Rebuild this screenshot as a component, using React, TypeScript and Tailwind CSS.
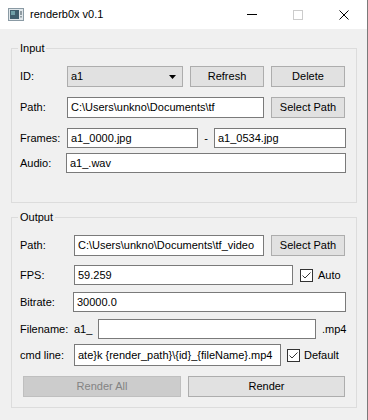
import React from "react";

const field = "flex items-center bg-white border border-[#7a7a7a] pl-[3px] overflow-hidden whitespace-nowrap";
const button = "flex items-center justify-center bg-[#e1e1e1] border border-[#adadad]";

function Group({ title, className, children }: { title: string; className?: string; children: React.ReactNode }) {
  return (
    <fieldset className={`ml-[11px] w-[346px] border border-[#dcdcdc] ${className ?? ""}`}>
      <legend className="ml-[6px] px-[2px] leading-[13px]">{title}</legend>
      <div className="pl-[8px]">{children}</div>
    </fieldset>
  );
}

function Check() {
  return (
    <svg width="13" height="13" viewBox="0 0 13 13" className="shrink-0">
      <rect x="0.5" y="0.5" width="12" height="12" fill="white" stroke="#333333" />
      <polyline points="2.5,6.5 5,9 10.5,3.5" fill="none" stroke="#333333" strokeWidth="1" />
    </svg>
  );
}

function TitleBar() {
  return (
    <div className="flex h-[29px] items-center bg-white">
      <svg width="16" height="13" viewBox="0 0 16 13" className="ml-[8px]">
        <rect x="0.5" y="0.5" width="15" height="12" fill="#dfe6ea" stroke="#8a9aa4" />
        <rect x="2" y="2" width="9" height="9" fill="#3f5f6e" />
        <rect x="3" y="3" width="4" height="4" fill="#6fa0a8" />
        <rect x="12.5" y="3" width="1" height="4" fill="#40505a" />
        <rect x="12.5" y="8" width="1" height="1.5" fill="#40505a" />
      </svg>
      <span className="ml-[6px] text-[11px] text-black">renderb0x v0.1</span>
      <div className="ml-auto flex h-full">
        <div className="flex w-[46px] items-center justify-center">
          <div className="h-px w-[10px] bg-black" />
        </div>
        <div className="flex w-[46px] items-center justify-center">
          <div className="h-[10px] w-[10px] border border-[#cccccc]" />
        </div>
        <div className="flex w-[46px] items-center justify-center">
          <svg width="10" height="10" viewBox="0 0 10 10">
            <path d="M0.5 0.5 L9.5 9.5 M9.5 0.5 L0.5 9.5" stroke="#000" strokeWidth="1" />
          </svg>
        </div>
      </div>
    </div>
  );
}

export default function App() {
  return (
    <div className="h-[420px] w-[368px] overflow-hidden border-r border-[#7a7a7a] bg-[#f0f0f0] font-['Liberation_Sans',Arial,sans-serif] text-[11px] text-black">
      <TitleBar />

      <Group title="Input" className="mt-[13px] pb-[29px]">
        <div className="mt-[11px] flex h-[21px] items-center">
          <span className="w-[47px]">ID:</span>
          <div className={`${button} w-[116px] h-full !justify-between pl-[3px] pr-[6px]`}>
            <span>a1</span>
            <svg width="7" height="4" viewBox="0 0 7 4">
              <path d="M0 0 H7 L3.5 4 Z" fill="#000" />
            </svg>
          </div>
          <div className={`${button} ml-[7px] h-full w-[74px]`}>Refresh</div>
          <div className={`${button} ml-[7px] h-full w-[74px]`}>Delete</div>
        </div>

        <div className="mt-[10px] flex h-[21px] items-center">
          <span className="w-[47px]">Path:</span>
          <div className={`${field} h-full w-[197px]`}>C:\Users\unkno\Documents\tf</div>
          <div className={`${button} ml-[7px] h-full w-[74px]`}>Select Path</div>
        </div>

        <div className="mt-[10px] flex h-[20px] items-center">
          <span className="w-[47px]">Frames:</span>
          <div className={`${field} h-full w-[131px]`}>a1_0000.jpg</div>
          <span className="w-[16px] text-center">-</span>
          <div className={`${field} h-full w-[132px]`}>a1_0534.jpg</div>
        </div>

        <div className="mt-[5px] flex h-[20px] items-center">
          <span className="w-[46px]">Audio:</span>
          <div className={`${field} h-full w-[280px]`}>a1_.wav</div>
        </div>
      </Group>

      <Group title="Output" className="mt-[8px] pb-[10px]">
        <div className="mt-[11px] flex h-[21px] items-center">
          <span className="w-[54px]">Path:</span>
          <div className={`${field} h-full w-[190px]`}>C:\Users\unkno\Documents\tf_video</div>
          <div className={`${button} ml-[7px] h-full w-[74px]`}>Select Path</div>
        </div>

        <div className="mt-[9px] flex h-[20px] items-center">
          <span className="w-[54px]">FPS:</span>
          <div className={`${field} h-full w-[219px]`}>59.259</div>
          <div className="ml-[7px]">
            <Check />
          </div>
          <span className="ml-[5px]">Auto</span>
        </div>

        <div className="mt-[7px] flex h-[20px] items-center">
          <span className="w-[53px]">Bitrate:</span>
          <div className={`${field} h-full w-[273px]`}>30000.0</div>
        </div>

        <div className="mt-[7px] flex h-[20px] items-center">
          <span className="w-[54px]">Filename:</span>
          <span className="w-[24px]">a1_</span>
          <div className={`${field} h-full w-[218px]`} />
          <span className="ml-[6px]">.mp4</span>
        </div>

        <div className="mt-[5px] flex h-[22px] items-center">
          <span className="w-[54px]">cmd line:</span>
          <div className={`${field} h-full w-[207px]`}>{"ate}k {render_path}\\{id}_{fileName}.mp4"}</div>
          <div className="ml-[6px]">
            <Check />
          </div>
          <span className="ml-[4px]">Default</span>
        </div>

        <div className="mt-[10px] flex h-[21px] items-center">
          <div className="ml-[3px] flex h-full w-[158px] items-center justify-center border border-[#bfbfbf] bg-[#cccccc] text-[#838383]">
            Render All
          </div>
          <div className={`${button} ml-[7px] h-full w-[157px]`}>Render</div>
        </div>
      </Group>
    </div>
  );
}
